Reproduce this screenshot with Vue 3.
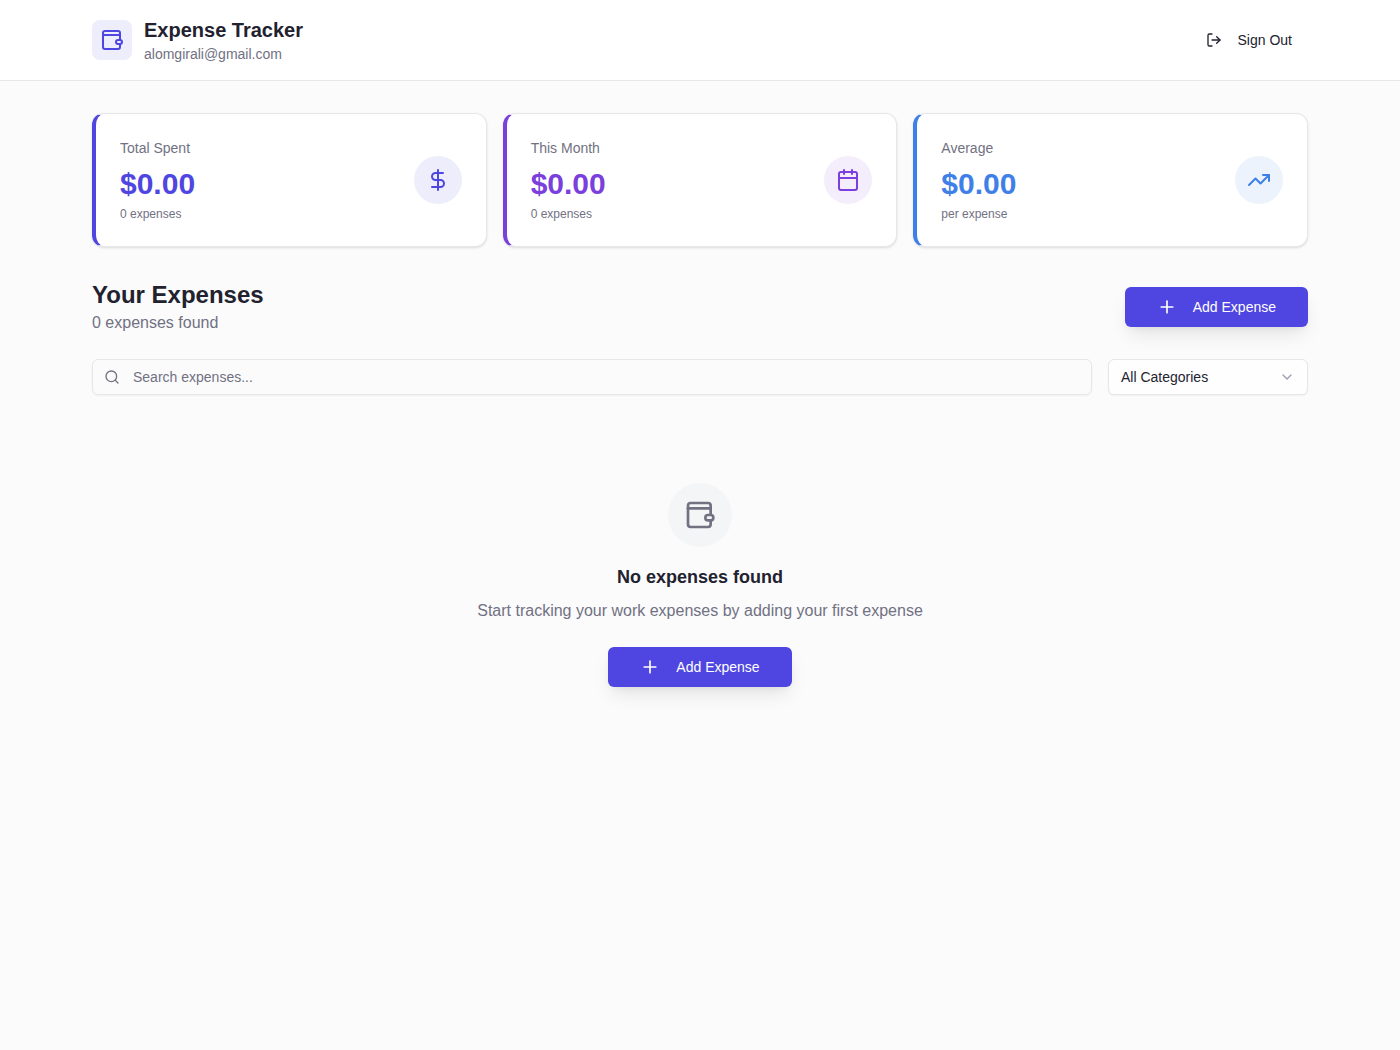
<template>
  <div class="page">
    <header class="topbar">
      <div class="container topbar-inner">
        <div class="brand">
          <div class="brand-icon">
            <svg width="24" height="24" viewBox="0 0 24 24" class="icon">
              <rect x="3" y="3" width="17" height="18" rx="2" />
              <path d="M3 7H20" />
              <rect x="16" y="12" width="6" height="4" rx="2" class="clasp" />
            </svg>
          </div>
          <div>
            <h1 class="brand-title">Expense Tracker</h1>
            <p class="brand-mail">alomgirali@gmail.com</p>
          </div>
        </div>
        <button class="sign-out">
          <svg width="16" height="16" viewBox="0 0 24 24" class="icon">
            <path d="M9 21H5a2 2 0 0 1-2-2V5a2 2 0 0 1 2-2h4" />
            <path d="M16 17l5-5-5-5" />
            <path d="M21 12H9" />
          </svg>
          <span>Sign Out</span>
        </button>
      </div>
    </header>

    <main class="container main">
      <section class="stats">
        <div v-for="card in cards" :key="card.label" class="stat-card" :class="card.tone">
          <div>
            <p class="stat-label">{{ card.label }}</p>
            <p class="stat-value">$0.00</p>
            <p class="stat-note">{{ card.note }}</p>
          </div>
          <div class="stat-icon">
            <svg v-if="card.tone === 'indigo'" width="24" height="24" viewBox="0 0 24 24" class="icon">
              <path d="M12 2v20" />
              <path d="M17 5H9.5a3.5 3.5 0 0 0 0 7h5a3.5 3.5 0 0 1 0 7H6" />
            </svg>
            <svg v-else-if="card.tone === 'purple'" width="24" height="24" viewBox="0 0 24 24" class="icon">
              <rect x="3" y="4" width="18" height="18" rx="2" />
              <path d="M8 2v4" />
              <path d="M16 2v4" />
              <path d="M3 10h18" />
            </svg>
            <svg v-else width="24" height="24" viewBox="0 0 24 24" class="icon">
              <path d="M22 7l-8.5 8.5-5-5L2 17" />
              <path d="M16 7h6v6" />
            </svg>
          </div>
        </div>
      </section>

      <section class="heading-row">
        <div>
          <h2 class="heading">Your Expenses</h2>
          <p class="heading-sub">0 expenses found</p>
        </div>
        <button class="add-btn">
          <svg width="20" height="20" viewBox="0 0 24 24" class="icon">
            <path d="M5 12h14" />
            <path d="M12 5v14" />
          </svg>
          <span>Add Expense</span>
        </button>
      </section>

      <section class="filters">
        <div class="search">
          <svg width="16" height="16" viewBox="0 0 24 24" class="icon">
            <circle cx="11" cy="11" r="8" />
            <path d="M21 21l-4.3-4.3" />
          </svg>
          <input class="search-input" type="text" placeholder="Search expenses..." />
        </div>
        <div class="select">
          <span>All Categories</span>
          <svg width="16" height="16" viewBox="0 0 24 24" class="icon">
            <path d="M6 9l6 6 6-6" />
          </svg>
        </div>
      </section>

      <section class="empty">
        <div class="empty-icon">
          <svg width="32" height="32" viewBox="0 0 24 24" class="icon">
            <rect x="3" y="3" width="17" height="18" rx="2" />
            <path d="M3 7H20" />
            <rect x="16" y="12" width="6" height="4" rx="2" class="clasp" />
          </svg>
        </div>
        <h3 class="empty-title">No expenses found</h3>
        <p class="empty-text">Start tracking your work expenses by adding your first expense</p>
        <button class="add-btn">
          <svg width="20" height="20" viewBox="0 0 24 24" class="icon">
            <path d="M5 12h14" />
            <path d="M12 5v14" />
          </svg>
          <span>Add Expense</span>
        </button>
      </section>
    </main>
  </div>
</template>

<script setup>
const cards = [
  { label: 'Total Spent', note: '0 expenses', tone: 'indigo' },
  { label: 'This Month', note: '0 expenses', tone: 'purple' },
  { label: 'Average', note: 'per expense', tone: 'blue' }
]
</script>

<style scoped>
.page {
  min-height: 1050px;
  background: #fbfbfc;
  font-family: "Liberation Sans", Arial, sans-serif;
  color: #22222f;
}

.container {
  width: 1216px;
  margin: 0 auto;
}

.icon {
  display: block;
  flex-shrink: 0;
  fill: none;
  stroke: currentColor;
  stroke-width: 2;
  stroke-linecap: round;
  stroke-linejoin: round;
}

.clasp {
  fill: #eeedfb;
}

p,
h1,
h2,
h3 {
  margin: 0;
}

.topbar {
  background: #ffffff;
  border-bottom: 1px solid #e5e7eb;
}

.topbar-inner {
  height: 80px;
  display: flex;
  align-items: center;
  justify-content: space-between;
}

.brand {
  display: flex;
  align-items: center;
  gap: 12px;
}

.brand-icon {
  width: 40px;
  height: 40px;
  border-radius: 8px;
  background: #eeedfb;
  color: #4f46e2;
  display: flex;
  align-items: center;
  justify-content: center;
}

.brand-title {
  font-size: 20px;
  line-height: 28px;
  font-weight: 700;
}

.brand-mail {
  font-size: 14px;
  line-height: 20px;
  color: #717182;
}

.sign-out {
  display: flex;
  align-items: center;
  gap: 16px;
  height: 40px;
  padding: 0 16px;
  border: 0;
  background: none;
  font: inherit;
  font-size: 14px;
  color: #22222f;
}

.main {
  padding-top: 32px;
}

.stats {
  display: grid;
  grid-template-columns: repeat(3, 1fr);
  gap: 16px;
}

.stat-card {
  display: flex;
  align-items: center;
  justify-content: space-between;
  height: 134px;
  box-sizing: border-box;
  padding: 0 24px;
  background: #ffffff;
  border: 1px solid #e5e7eb;
  border-left: 4px solid;
  border-radius: 12px;
  box-shadow: 0 1px 3px rgba(0, 0, 0, 0.1), 0 1px 2px -1px rgba(0, 0, 0, 0.1);
}

.stat-card.indigo {
  border-left-color: #4f46e2;
}

.stat-card.purple {
  border-left-color: #7a3fdc;
}

.stat-card.blue {
  border-left-color: #3f80e8;
}

.stat-label {
  font-size: 14px;
  line-height: 20px;
  color: #717182;
}

.stat-value {
  margin-top: 8px;
  font-size: 30px;
  line-height: 36px;
  font-weight: 700;
}

.stat-note {
  margin-top: 4px;
  font-size: 12px;
  line-height: 16px;
  color: #717182;
}

.indigo .stat-value,
.indigo .stat-icon {
  color: #4f46e2;
}

.purple .stat-value,
.purple .stat-icon {
  color: #7a3fdc;
}

.blue .stat-value,
.blue .stat-icon {
  color: #3f80e8;
}

.stat-icon {
  width: 48px;
  height: 48px;
  border-radius: 50%;
  display: flex;
  align-items: center;
  justify-content: center;
}

.indigo .stat-icon {
  background: #eeedfb;
}

.purple .stat-icon {
  background: #f3edfc;
}

.blue .stat-icon {
  background: #ecf3fd;
}

.heading-row {
  display: flex;
  align-items: center;
  justify-content: space-between;
  margin-top: 32px;
}

.heading {
  font-size: 24px;
  line-height: 32px;
  font-weight: 700;
}

.heading-sub {
  font-size: 16px;
  line-height: 24px;
  color: #717182;
}

.add-btn {
  display: flex;
  align-items: center;
  gap: 16px;
  height: 40px;
  padding: 0 32px;
  border: 0;
  border-radius: 6px;
  background: #4f46e2;
  color: #ffffff;
  font: inherit;
  font-size: 14px;
  box-shadow: 0 10px 20px -4px rgba(0, 0, 0, 0.1), 0 4px 8px -4px rgba(0, 0, 0, 0.08);
}

.filters {
  display: flex;
  gap: 16px;
  margin-top: 24px;
}

.search {
  flex: 1;
  display: flex;
  align-items: center;
  gap: 13px;
  height: 36px;
  box-sizing: border-box;
  padding: 0 12px 0 11px;
  border: 1px solid #e5e7eb;
  border-radius: 6px;
  color: #717182;
  box-shadow: 0 1px 2px rgba(0, 0, 0, 0.05);
}

.search-input {
  flex: 1;
  border: 0;
  outline: 0;
  padding: 0;
  background: transparent;
  font: inherit;
  font-size: 14px;
  color: #22222f;
}

.search-input::placeholder {
  color: #717182;
  opacity: 1;
}

.select {
  width: 200px;
  height: 36px;
  box-sizing: border-box;
  display: flex;
  align-items: center;
  justify-content: space-between;
  padding: 0 12px;
  background: #fefefe;
  border: 1px solid #e5e7eb;
  border-radius: 6px;
  font-size: 14px;
  color: #22222f;
  box-shadow: 0 1px 2px rgba(0, 0, 0, 0.05);
}

.select .icon {
  color: #9d9dab;
}

.empty {
  display: flex;
  flex-direction: column;
  align-items: center;
  padding-top: 88px;
}

.empty-icon {
  width: 64px;
  height: 64px;
  border-radius: 50%;
  background: #f4f5f6;
  color: #717182;
  display: flex;
  align-items: center;
  justify-content: center;
}

.empty-icon .clasp {
  fill: #f4f5f6;
}

.empty-title {
  margin-top: 16px;
  font-size: 18px;
  line-height: 28px;
  font-weight: 700;
}

.empty-text {
  margin-top: 8px;
  font-size: 16px;
  line-height: 24px;
  color: #717182;
}

.empty .add-btn {
  margin-top: 24px;
}
</style>
